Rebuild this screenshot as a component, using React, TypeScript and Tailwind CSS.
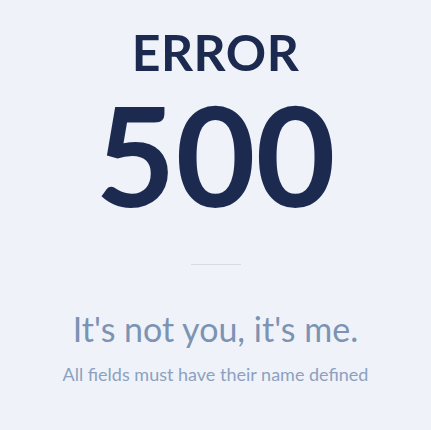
export default function App() {
  return (
    <div className="min-h-screen bg-[#eff3f9] flex flex-col items-center pt-[24px] font-['Lato','Liberation_Sans',sans-serif]">
      {/* error code block */}
      <h1 className="text-[50px] leading-[56px] font-bold tracking-[0.5px] text-[#1b2a4e]">ERROR</h1>
      <div className="text-[138px] leading-[130px] font-bold text-[#1b2a4e] mt-[9px]">500</div>

      <hr className="w-[50px] border-t border-[#d6dce5] mt-[45px]" />

      {/* message */}
      <p className="text-[34px] leading-[40px] text-[#7c93b3] mt-[44px]">It's not you, it's me.</p>
      <p className="text-[18px] leading-[24px] text-[#8ca1bf] mt-[13px]">All fields must have their name defined</p>
    </div>
  );
}
